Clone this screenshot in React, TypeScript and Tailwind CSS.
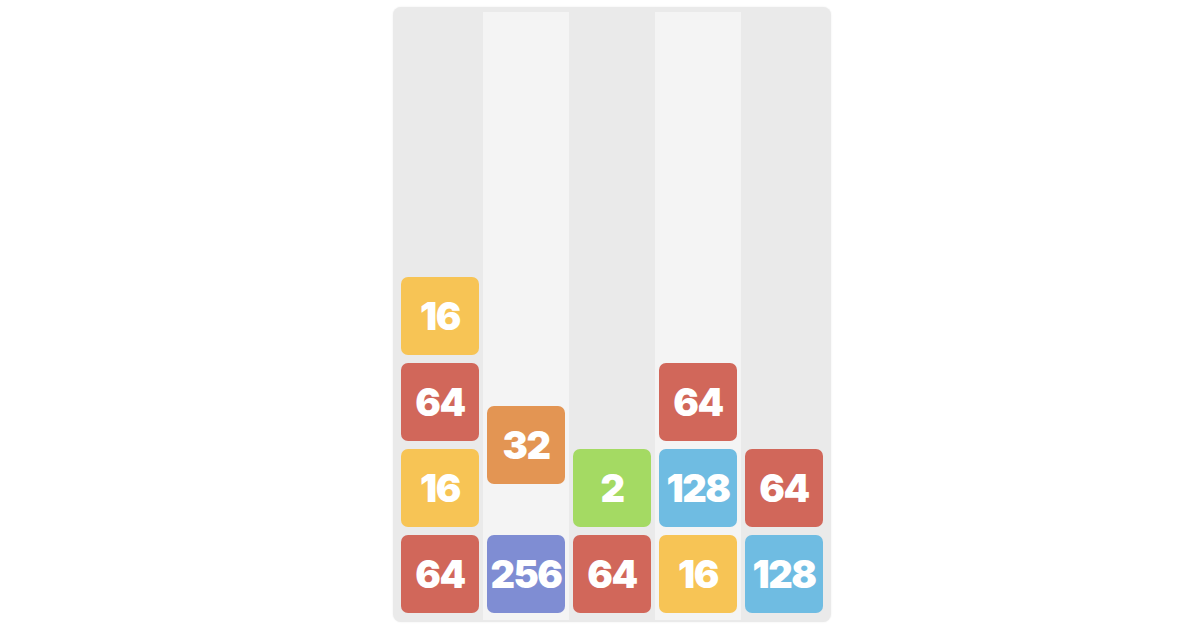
import React from 'react'

type Tile = { value: number } | null

const colors: Record<number, string> = {
  2: 'bg-[#a4da63]',
  16: 'bg-[#f7c455]',
  32: 'bg-[#e39553]',
  64: 'bg-[#d1675a]',
  128: 'bg-[#6fbce2]',
  256: 'bg-[#7f8dd3]',
}

// columns listed bottom to top
const columns: { light: boolean; tiles: Tile[] }[] = [
  { light: false, tiles: [{ value: 64 }, { value: 16 }, { value: 64 }, { value: 16 }] },
  { light: true, tiles: [{ value: 256 }, null, { value: 32 }] },
  { light: false, tiles: [{ value: 64 }, { value: 2 }] },
  { light: true, tiles: [{ value: 16 }, { value: 128 }, { value: 64 }] },
  { light: false, tiles: [{ value: 128 }, { value: 64 }] },
]

function TileBox({ value }: { value: number }) {
  return (
    <div
      className={`w-[78px] h-[78px] rounded-[7px] flex items-center justify-center text-white text-[38px] leading-none font-black tracking-[-1.5px] ${colors[value]}`}
      style={{ fontFamily: 'Inter, "Open Sans", sans-serif' }}
    >
      {value}
    </div>
  )
}

export default function App() {
  return (
    <div className="w-[1200px] h-[630px] bg-white pl-[393px] pt-[7px]">
      <div className="w-[438px] h-[615px] rounded-lg bg-[#eaeaea] pt-[5px] px-[4px] pb-[2px] flex shadow-[0_0_2px_rgba(0,0,0,0.08)]">
        {columns.map((col, i) => (
          <div
            key={i}
            className={`w-[86px] h-full flex flex-col-reverse items-center pb-[7px] gap-2 ${col.light ? 'bg-[#f4f4f4]' : 'bg-[#eaeaea]'}`}
          >
            {col.tiles.map((t, j) =>
              t ? (
                <div key={j} className={j === 2 && i === 1 ? '-mb-[43px]' : ''}>
                  <TileBox value={t.value} />
                </div>
              ) : (
                <div key={j} className="w-[78px] h-[78px]" />
              ),
            )}
          </div>
        ))}
      </div>
    </div>
  )
}
